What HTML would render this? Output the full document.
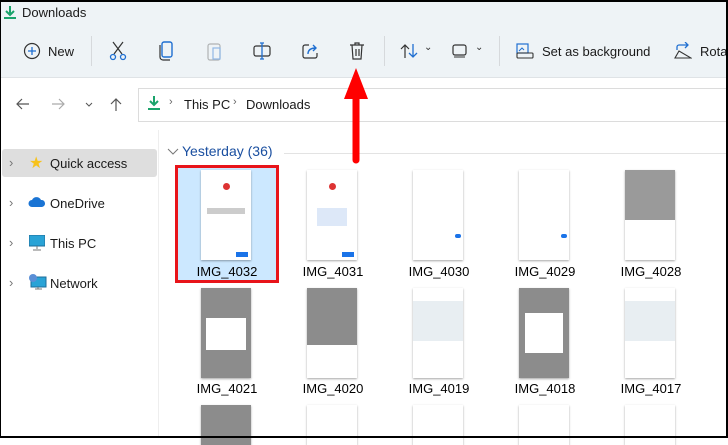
<!DOCTYPE html>
<html><head><meta charset="utf-8"><style>
*{margin:0;padding:0;box-sizing:border-box}
body{width:728px;height:438px;overflow:hidden;font-family:"Liberation Sans",sans-serif;background:#fff;position:relative}
.frame{position:absolute;inset:0;border:2px solid #000;border-left-width:1px;pointer-events:none;z-index:20}
.top{position:absolute;left:0;top:0;width:728px;height:78px;background:#eef3f6;border-bottom:1px solid #dfe3e6}
.a{position:absolute;white-space:nowrap}
.t{font-size:13px;color:#1a1a1a}
.sep{position:absolute;width:1px;background:#d6d9dc}
.lbl{position:absolute;font-size:13px;color:#000;width:106px;text-align:center}
.th{position:absolute;width:50px;height:90px;background:#fff;box-shadow:0 1px 2px rgba(0,0,0,.35)}
.g{background:#8c8c8c}
</style></head><body>
<div class="top"></div>
<svg class="a" style="left:3px;top:5px" width="14" height="15"><path d="M7 1v9M3 6l4 4 4-4" stroke="#1aa36b" stroke-width="2" fill="none"/><path d="M1 13h12" stroke="#1aa36b" stroke-width="2"/></svg>
<div class="a t" style="left:22px;top:5px">Downloads</div>
<svg class="a" style="left:23px;top:42px" width="18" height="18"><circle cx="9" cy="9" r="7.5" stroke="#333" fill="none" stroke-width="1.2"/><path d="M9 5v8M5 9h8" stroke="#1f6fd1" stroke-width="1.3"/></svg>
<div class="a t" style="left:48px;top:44px">New</div>
<div class="sep" style="left:91px;top:36px;height:30px"></div>
<svg class="a" style="left:109px;top:41px" width="18" height="20"><path d="M4 1l9 12M14 1L5 13" stroke="#333" stroke-width="1.2"/><circle cx="4" cy="16" r="2.5" fill="none" stroke="#1f6fd1" stroke-width="1.3"/><circle cx="14" cy="16" r="2.5" fill="none" stroke="#1f6fd1" stroke-width="1.3"/></svg>
<svg class="a" style="left:158px;top:41px" width="16" height="20"><rect x="4" y="1" width="10" height="15" rx="2" fill="none" stroke="#1f6fd1" stroke-width="1.4"/><path d="M2 4v12a3 3 0 0 0 3 3h7" fill="none" stroke="#333" stroke-width="1.2"/></svg>
<svg class="a" style="left:206px;top:41px" width="16" height="20" opacity=".45"><rect x="2" y="3" width="12" height="16" rx="2" fill="none" stroke="#666" stroke-width="1.2"/><rect x="7" y="7" width="7" height="11" fill="none" stroke="#1f6fd1" stroke-width="1.2"/></svg>
<svg class="a" style="left:253px;top:42px" width="18" height="18"><rect x="1" y="4" width="16" height="10" rx="2" fill="none" stroke="#333" stroke-width="1.2"/><path d="M9 1v16M7 1h4M7 17h4" stroke="#1f6fd1" stroke-width="1.3"/></svg>
<svg class="a" style="left:302px;top:42px" width="18" height="18"><path d="M7 3H3a2 2 0 0 0-2 2v9a2 2 0 0 0 2 2h10a2 2 0 0 0 2-2v-3" fill="none" stroke="#333" stroke-width="1.2"/><path d="M6 12c0-4 3-6 8-6M11 3l3 3-3 3" fill="none" stroke="#1f6fd1" stroke-width="1.4"/></svg>
<svg class="a" style="left:349px;top:41px" width="16" height="20"><path d="M1 4h14M6 4V2h4v2M3 4l1 14h8l1-14M7 8v7M10 8v7" fill="none" stroke="#333" stroke-width="1.2"/></svg>
<div class="sep" style="left:384px;top:36px;height:30px"></div>
<svg class="a" style="left:400px;top:43px" width="18" height="16"><path d="M5 15V2M1 6l4-4 4 4" fill="none" stroke="#333" stroke-width="1.2"/><path d="M13 1v13M9 10l4 4 4-4" fill="none" stroke="#1f6fd1" stroke-width="1.3"/></svg>
<div class="a" style="left:424px;top:42px;font-size:10px;color:#333">&#x2304;</div>
<svg class="a" style="left:452px;top:44px" width="16" height="14"><rect x="1" y="1" width="13" height="10" rx="2" fill="none" stroke="#333" stroke-width="1.2"/><path d="M2 13h11" stroke="#333"/></svg>
<div class="a" style="left:475px;top:42px;font-size:10px;color:#333">&#x2304;</div>
<div class="sep" style="left:499px;top:36px;height:30px"></div>
<svg class="a" style="left:516px;top:43px" width="18" height="16"><rect x="1" y="1" width="11" height="9" fill="none" stroke="#1f6fd1" stroke-width="1.2"/><path d="M3 8l3-3 2 2" stroke="#1f6fd1" fill="none"/><rect x="1" y="10" width="16" height="5" rx="1" fill="none" stroke="#333" stroke-width="1.1"/></svg>
<div class="a t" style="left:542px;top:44px">Set as background</div>
<svg class="a" style="left:674px;top:42px" width="18" height="18"><path d="M3 8V5a2 2 0 0 1 2-2h9M11 0l3 3-3 3" fill="none" stroke="#1f6fd1" stroke-width="1.3"/><path d="M1 16h16L5 9z" fill="none" stroke="#333" stroke-width="1.1"/></svg>
<div class="a t" style="left:700px;top:44px">Rotat</div>
<div class="a" style="left:138px;top:88px;width:590px;height:34px;border-top:1px solid #dcdcdc;border-bottom:1px solid #dcdcdc;border-left:1px solid #dcdcdc"></div>
<svg class="a" style="left:14px;top:96px" width="110" height="16"><path d="M15 8H3M8 3L3 8l5 5" fill="none" stroke="#555" stroke-width="1.2"/><path d="M38 8h12M45 3l5 5-5 5" fill="none" stroke="#aaa" stroke-width="1.2"/><path d="M72 7l3 3 3-3" fill="none" stroke="#555"/><path d="M102 15V3M97 8l5-5 5 5" fill="none" stroke="#555" stroke-width="1.2"/></svg>
<svg class="a" style="left:147px;top:95px" width="14" height="16"><path d="M7 1v9M3 6l4 4 4-4" stroke="#1aa36b" stroke-width="2" fill="none"/><path d="M1 14h12" stroke="#1aa36b" stroke-width="2"/></svg>
<div class="a" style="left:169px;top:96px;font-size:11px;color:#666">›</div>
<div class="a t" style="left:184px;top:97px">This PC</div>
<div class="a" style="left:233px;top:96px;font-size:11px;color:#666">›</div>
<div class="a t" style="left:246px;top:97px">Downloads</div>
<div class="sep" style="left:158px;top:130px;height:308px;background:#eee"></div>
<div class="a" style="left:2px;top:149px;width:155px;height:28px;background:#dedede;border-radius:3px"></div>
<div class="a" style="left:9px;top:155px;font-size:13px;color:#777">›</div>
<div class="a" style="left:9px;top:195px;font-size:13px;color:#777">›</div>
<div class="a" style="left:9px;top:235px;font-size:13px;color:#777">›</div>
<div class="a" style="left:9px;top:275px;font-size:13px;color:#777">›</div>
<div class="a" style="left:29px;top:153px;font-size:16px;color:#f7c21b">★</div>
<svg class="a" style="left:28px;top:196px" width="18" height="12"><path d="M4 11a3.5 3.5 0 0 1 0-7 5 5 0 0 1 9 0 3.5 3.5 0 0 1 1 7z" fill="#1a74d4"/></svg>
<svg class="a" style="left:29px;top:235px" width="16" height="16"><rect x="0" y="0" width="16" height="11" fill="#2aa3d6" stroke="#1f6e9a"/><path d="M8 11v3M4 15h8" stroke="#777"/></svg>
<svg class="a" style="left:29px;top:274px" width="18" height="16"><rect x="2" y="3" width="15" height="10" fill="#2aa3d6" stroke="#1f6e9a"/><circle cx="4" cy="4" r="4" fill="#5b8fd6"/><path d="M9 13v2M6 15h7" stroke="#777"/></svg>
<div class="a t" style="left:50px;top:156px">Quick access</div>
<div class="a t" style="left:50px;top:196px">OneDrive</div>
<div class="a t" style="left:50px;top:236px">This PC</div>
<div class="a t" style="left:50px;top:276px">Network</div>
<svg class="a" style="left:167px;top:147px" width="12" height="10"><path d="M1 2l5 5 5-5" fill="none" stroke="#777"/></svg>
<div class="a" style="left:182px;top:143px;font-size:14px;color:#1a4fa0">Yesterday (36)</div>
<div class="a" style="left:284px;top:153px;width:444px;height:1px;background:#e3e3e3"></div>
<div class="a" style="left:175px;top:165px;width:104px;height:118px;background:#cce8ff;border:3px solid #e8141a"></div>
<div class="th" style="left:201px;top:170px"><div style="margin:13px auto 0;width:7px;height:7px;border-radius:50%;background:#d33"></div><div style="margin:18px 6px;height:6px;background:#ccc"></div><div style="position:absolute;right:3px;bottom:3px;width:12px;height:5px;background:#1a73e8"></div></div>
<div class="th" style="left:307px;top:170px"><div style="margin:13px auto 0;width:7px;height:7px;border-radius:50%;background:#d33"></div><div style="margin:18px 10px;height:18px;background:#dde8f8"></div><div style="position:absolute;right:3px;bottom:3px;width:12px;height:5px;background:#1a73e8"></div></div>
<div class="th" style="left:413px;top:170px"><div style="position:absolute;right:2px;top:64px;width:6px;height:4px;background:#1a73e8;border-radius:2px"></div></div>
<div class="th" style="left:519px;top:170px"><div style="position:absolute;right:2px;top:64px;width:6px;height:4px;background:#1a73e8;border-radius:2px"></div></div>
<div class="th" style="left:625px;top:170px"><div style="height:50px;background:#9a9a9a"></div></div>
<div class="lbl" style="left:174px;top:264px">IMG_4032</div>
<div class="lbl" style="left:280px;top:264px">IMG_4031</div>
<div class="lbl" style="left:386px;top:264px">IMG_4030</div>
<div class="lbl" style="left:492px;top:264px">IMG_4029</div>
<div class="lbl" style="left:598px;top:264px">IMG_4028</div>
<div class="th g" style="left:201px;top:288px"><div style="margin:30px 5px;height:32px;background:#fff"></div></div>
<div class="th" style="left:307px;top:288px"><div style="height:57px;background:#8c8c8c"></div></div>
<div class="th" style="left:413px;top:288px"><div style="margin-top:13px;height:40px;background:#e8eef2"></div></div>
<div class="th g" style="left:519px;top:288px"><div style="margin:25px 6px;height:40px;background:#fff"></div></div>
<div class="th" style="left:625px;top:288px"><div style="margin-top:13px;height:40px;background:#e8eef2"></div></div>
<div class="lbl" style="left:174px;top:381px">IMG_4021</div>
<div class="lbl" style="left:280px;top:381px">IMG_4020</div>
<div class="lbl" style="left:386px;top:381px">IMG_4019</div>
<div class="lbl" style="left:492px;top:381px">IMG_4018</div>
<div class="lbl" style="left:598px;top:381px">IMG_4017</div>
<div class="th g" style="left:201px;top:405px;height:40px"></div>
<div class="th" style="left:307px;top:405px;height:40px"></div>
<div class="th" style="left:413px;top:405px;height:40px"></div>
<div class="th" style="left:519px;top:405px;height:40px"></div>
<div class="th" style="left:625px;top:405px;height:40px"></div>
<svg class="a" style="left:342px;top:66px;z-index:10" width="28" height="100"><path d="M14 28v66" stroke="#f00" stroke-width="7" stroke-linecap="round"/><path d="M2 33L14 2l12 31z" fill="#f00"/></svg>
<div class="frame"></div>
</body></html>
